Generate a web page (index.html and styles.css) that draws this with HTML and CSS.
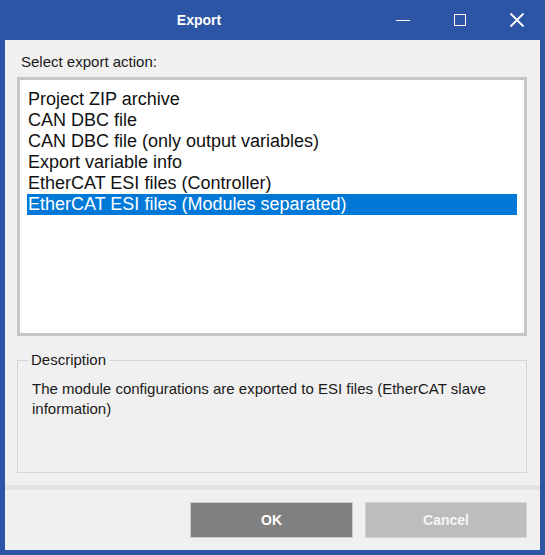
FILE: index.html
```html
<!DOCTYPE html>
<html lang="en">
  <head>
    <meta charset="UTF-8">
    <title>Export</title>
    <link rel="stylesheet" href="styles.css">
  </head>
  <body>
    <div class="window">
      <header class="titlebar">
        <div class="title">Export</div>
        <div class="controls">
          <span class="ctl">
            <svg width="16" height="16" viewBox="0 0 16 16"><line x1="1" y1="8.5" x2="15" y2="8.5" stroke="#fff" stroke-width="1"/></svg>
          </span>
          <span class="ctl">
            <svg width="16" height="16" viewBox="0 0 16 16"><rect x="2.5" y="2.5" width="11" height="11" fill="none" stroke="#fff" stroke-width="1"/></svg>
          </span>
          <span class="ctl">
            <svg width="16" height="16" viewBox="0 0 16 16"><path d="M1.5 1.5 L14.5 14.5 M14.5 1.5 L1.5 14.5" stroke="#fff" stroke-width="1.8"/></svg>
          </span>
        </div>
      </header>
      <div class="dialog">
        <div class="main">
          <div class="caption">Select export action:</div>
          <ul class="listbox">
            <li>Project ZIP archive</li>
            <li>CAN DBC file</li>
            <li>CAN DBC file (only output variables)</li>
            <li>Export variable info</li>
            <li>EtherCAT ESI files (Controller)</li>
            <li class="selected">EtherCAT ESI files (Modules separated)</li>
          </ul>
          <fieldset class="group">
            <legend>Description</legend>
            <p>The module configurations are exported to ESI files (EtherCAT slave information)</p>
          </fieldset>
        </div>
        <div class="sep"></div>
        <footer class="buttons">
          <button class="btn btn-ok">OK</button>
          <button class="btn btn-cancel">Cancel</button>
        </footer>
      </div>
    </div>
  </body>
</html>
```

FILE: styles.css
```css
body {
  margin: 0;
  padding: 0;
  font-family: "Liberation Sans", Arial, sans-serif;
  background: #2d55a5;
}
.window {
  width: 545px;
  height: 555px;
  box-sizing: border-box;
  padding: 0 5px 5px 5px;
  background: #2d55a5;
  display: flex;
  flex-direction: column;
}
.titlebar {
  height: 40px;
  margin: 0 -5px;
  display: flex;
  align-items: center;
}
.title {
  flex: 1;
  padding-left: 24px;
  text-align: center;
  color: #fff;
  font-weight: bold;
  font-size: 14px;
}
.controls {
  display: flex;
  height: 40px;
}
.ctl {
  width: 57px;
  display: flex;
  align-items: center;
  justify-content: center;
}
.dialog {
  flex: 1;
  background: #f0f0f0;
  display: flex;
  flex-direction: column;
}
.main {
  padding: 0 13px 0 12px;
}
.caption {
  margin-top: 13px;
  padding-left: 4px;
  font-size: 15px;
  line-height: 18px;
  color: #1a1a1a;
}
.listbox {
  list-style: none;
  margin: 6px 0 0 0;
  height: 259px;
  box-sizing: border-box;
  border: 3px solid #c6c6c6;
  background: #fff;
  padding: 9px 7px;
}
.listbox li {
  font-size: 18px;
  line-height: 21px;
  height: 21px;
  padding-left: 1px;
  color: #111;
  white-space: nowrap;
}
.listbox li.selected {
  background: #0078d7;
  color: #fff;
}
.group {
  margin: 15px 0 0 0;
  height: 122px;
  box-sizing: border-box;
  border: 1px solid #d6d6d6;
  padding: 0 10px 0 14px;
}
.group legend {
  margin-left: -4px;
  padding: 0 3px;
  font-size: 15px;
  line-height: 18px;
  color: #1a1a1a;
}
.group p {
  margin: 10px 0 0 0;
  font-size: 15px;
  line-height: 20px;
  color: #1a1a1a;
}
.sep {
  margin-top: 12px;
  height: 5px;
  background: #e3e3e3;
}
.buttons {
  flex: 1;
  display: flex;
  justify-content: flex-end;
  align-items: flex-start;
  gap: 12px;
  padding: 12px 13px 0 0;
}
.btn {
  width: 163px;
  height: 36px;
  border: 1px solid #cdcdcd;
  font-family: "Liberation Sans", Arial, sans-serif;
  font-weight: bold;
  font-size: 14px;
  color: #fff;
}
.btn-ok {
  background: #808080;
}
.btn-cancel {
  width: 162px;
  background: #bdbdbd;
  border-color: #d2d2d2;
  color: #f6f6f6;
}
```
